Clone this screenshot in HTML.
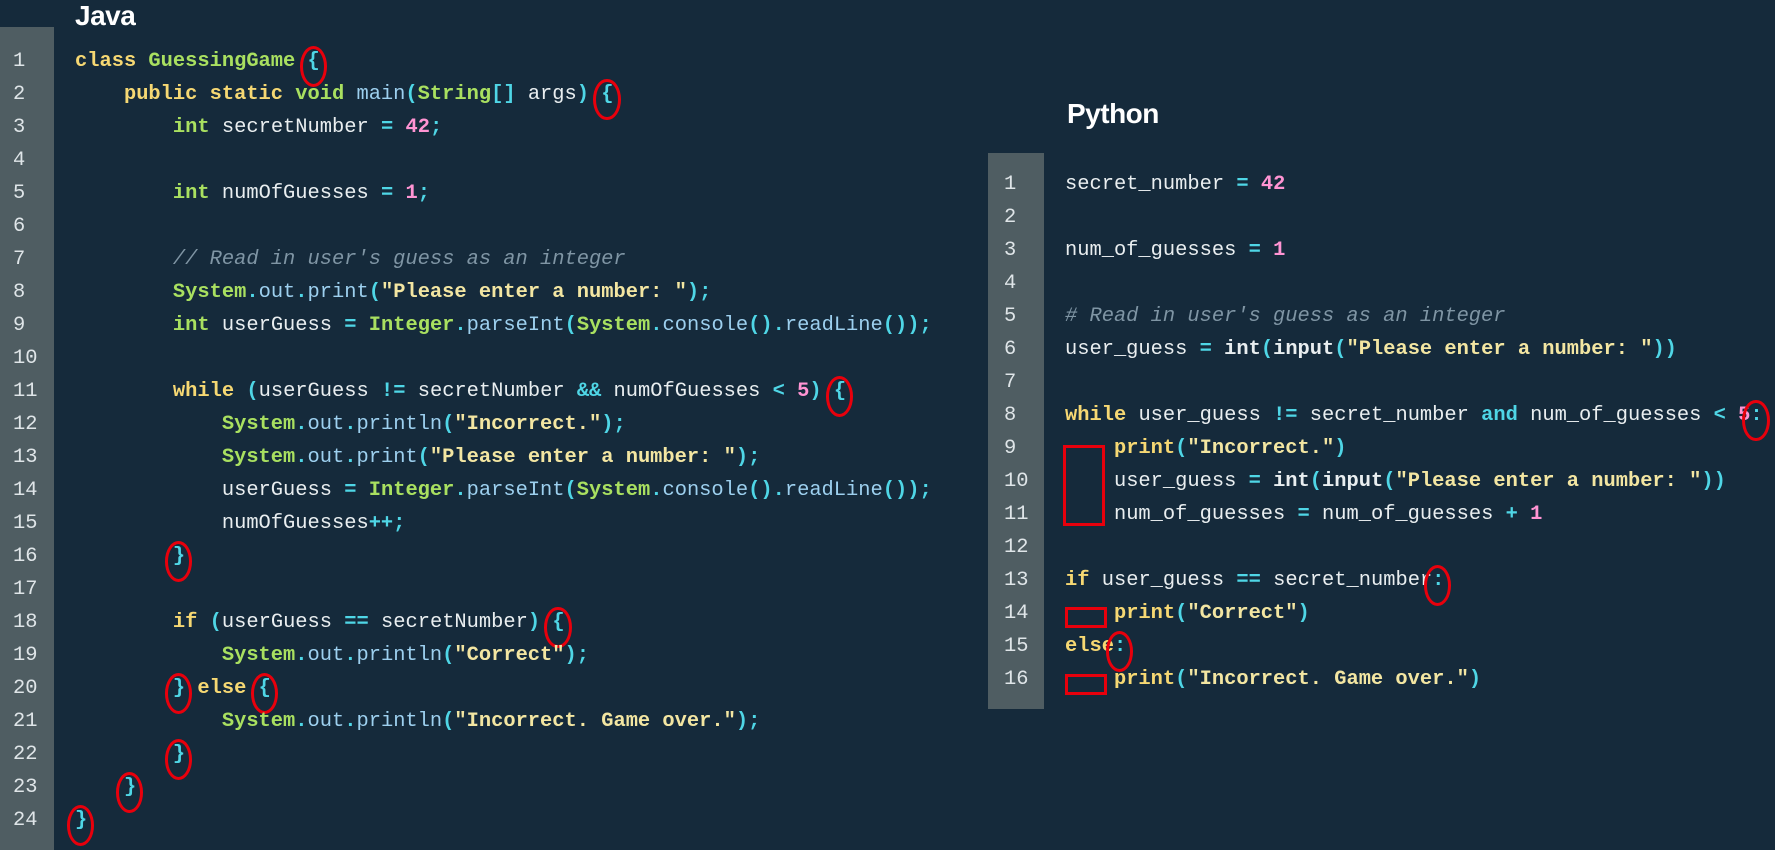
<!DOCTYPE html>
<html><head><meta charset="utf-8"><style>
html,body{margin:0;padding:0}
body{width:1775px;height:850px;background:#152a3b;position:relative;overflow:hidden;font-family:"Liberation Mono",monospace;font-size:20.4px;font-weight:bold;color:#e9eef0}
.t{position:absolute;font-family:"Liberation Sans",sans-serif;font-weight:bold;color:#fff;font-size:28px;letter-spacing:-0.5px}
.g{position:absolute;background:#4f5d62}
.l{position:absolute;white-space:pre;line-height:33px;height:33px}
.n{position:absolute;white-space:pre;line-height:33px;color:#dfe5e8;font-weight:normal}
.k{color:#f6d873}.ty{color:#a9e060}.m{color:#9dd0ef;font-weight:normal}.p{color:#4fd6e6}.s{color:#f3e6a2}.nu{color:#ff94d3}.c{color:#7f95a4;font-style:italic;font-weight:normal}.w{color:#e9eef0;font-weight:normal}
.o{position:relative}
.o::after{content:"";position:absolute;left:-8px;top:-4px;width:calc(100% + 9px);height:35px;border:3.5px solid #e8000c;border-radius:50%}
.r{position:absolute;border:3.5px solid #e8000c;box-sizing:border-box}
</style></head><body>
<div class="t" style="left:75px;top:0px">Java</div>
<div class="g" style="left:0;top:27px;width:54px;height:823px"></div>
<div class="l" style="left:75px;top:45px"><span class="k">class </span><span class="ty">GuessingGame</span> <span class="o p">{</span></div>
<div class="l" style="left:75px;top:78px">    <span class="k">public static </span><span class="ty">void </span><span class="m">main</span><span class="p">(</span><span class="ty">String</span><span class="p">[]</span> <span class="w">args</span><span class="p">)</span> <span class="o p">{</span></div>
<div class="l" style="left:75px;top:111px">        <span class="ty">int</span> <span class="w">secretNumber</span> <span class="p">=</span> <span class="nu">42</span><span class="p">;</span></div>
<div class="l" style="left:75px;top:177px">        <span class="ty">int</span> <span class="w">numOfGuesses</span> <span class="p">=</span> <span class="nu">1</span><span class="p">;</span></div>
<div class="l" style="left:75px;top:243px">        <span class="c">// Read in user's guess as an integer</span></div>
<div class="l" style="left:75px;top:276px">        <span class="ty">System</span><span class="p">.</span><span class="m">out</span><span class="p">.</span><span class="m">print</span><span class="p">(</span><span class="s">"Please enter a number: "</span><span class="p">);</span></div>
<div class="l" style="left:75px;top:309px">        <span class="ty">int</span> <span class="w">userGuess</span> <span class="p">=</span> <span class="ty">Integer</span><span class="p">.</span><span class="m">parseInt</span><span class="p">(</span><span class="ty">System</span><span class="p">.</span><span class="m">console</span><span class="p">().</span><span class="m">readLine</span><span class="p">());</span></div>
<div class="l" style="left:75px;top:375px">        <span class="k">while</span> <span class="p">(</span><span class="w">userGuess</span> <span class="p">!=</span> <span class="w">secretNumber</span> <span class="p">&amp;&amp;</span> <span class="w">numOfGuesses</span> <span class="p">&lt;</span> <span class="nu">5</span><span class="p">)</span> <span class="o p">{</span></div>
<div class="l" style="left:75px;top:408px">            <span class="ty">System</span><span class="p">.</span><span class="m">out</span><span class="p">.</span><span class="m">println</span><span class="p">(</span><span class="s">"Incorrect."</span><span class="p">);</span></div>
<div class="l" style="left:75px;top:441px">            <span class="ty">System</span><span class="p">.</span><span class="m">out</span><span class="p">.</span><span class="m">print</span><span class="p">(</span><span class="s">"Please enter a number: "</span><span class="p">);</span></div>
<div class="l" style="left:75px;top:474px">            <span class="w">userGuess</span> <span class="p">=</span> <span class="ty">Integer</span><span class="p">.</span><span class="m">parseInt</span><span class="p">(</span><span class="ty">System</span><span class="p">.</span><span class="m">console</span><span class="p">().</span><span class="m">readLine</span><span class="p">());</span></div>
<div class="l" style="left:75px;top:507px">            <span class="w">numOfGuesses</span><span class="p">++;</span></div>
<div class="l" style="left:75px;top:540px">        <span class="o p">}</span></div>
<div class="l" style="left:75px;top:606px">        <span class="k">if</span> <span class="p">(</span><span class="w">userGuess</span> <span class="p">==</span> <span class="w">secretNumber</span><span class="p">)</span> <span class="o p">{</span></div>
<div class="l" style="left:75px;top:639px">            <span class="ty">System</span><span class="p">.</span><span class="m">out</span><span class="p">.</span><span class="m">println</span><span class="p">(</span><span class="s">"Correct"</span><span class="p">);</span></div>
<div class="l" style="left:75px;top:672px">        <span class="o p">}</span> <span class="k">else</span> <span class="o p">{</span></div>
<div class="l" style="left:75px;top:705px">            <span class="ty">System</span><span class="p">.</span><span class="m">out</span><span class="p">.</span><span class="m">println</span><span class="p">(</span><span class="s">"Incorrect. Game over."</span><span class="p">);</span></div>
<div class="l" style="left:75px;top:738px">        <span class="o p">}</span></div>
<div class="l" style="left:75px;top:771px">    <span class="o p">}</span></div>
<div class="l" style="left:75px;top:804px"><span class="o p">}</span></div>
<div class="n" style="left:13px;top:45px">1
2
3
4
5
6
7
8
9
10
11
12
13
14
15
16
17
18
19
20
21
22
23
24</div>

<div class="t" style="left:1067px;top:98px">Python</div>
<div class="g" style="left:988px;top:153px;width:56px;height:556px"></div>
<div class="n" style="left:1004px;top:168px">1
2
3
4
5
6
7
8
9
10
11
12
13
14
15
16</div>
<div class="l" style="left:1065px;top:168px"><span class="w">secret_number</span> <span class="p">=</span> <span class="nu">42</span></div>
<div class="l" style="left:1065px;top:234px"><span class="w">num_of_guesses</span> <span class="p">=</span> <span class="nu">1</span></div>
<div class="l" style="left:1065px;top:300px"><span class="c"># Read in user's guess as an integer</span></div>
<div class="l" style="left:1065px;top:333px"><span class="w">user_guess</span> <span class="p">=</span> int<span class="p">(</span>input<span class="p">(</span><span class="s">"Please enter a number: "</span><span class="p">))</span></div>
<div class="l" style="left:1065px;top:399px"><span class="k">while</span> <span class="w">user_guess</span> <span class="p">!=</span> <span class="w">secret_number</span> <span class="p">and</span> <span class="w">num_of_guesses</span> <span class="p">&lt;</span> <span class="nu">5</span><span class="o p">:</span></div>
<div class="l" style="left:1065px;top:432px">    <span class="k">print</span><span class="p">(</span><span class="s">"Incorrect."</span><span class="p">)</span></div>
<div class="l" style="left:1065px;top:465px">    <span class="w">user_guess</span> <span class="p">=</span> int<span class="p">(</span>input<span class="p">(</span><span class="s">"Please enter a number: "</span><span class="p">))</span></div>
<div class="l" style="left:1065px;top:498px">    <span class="w">num_of_guesses</span> <span class="p">=</span> <span class="w">num_of_guesses</span> <span class="p">+</span> <span class="nu">1</span></div>
<div class="l" style="left:1065px;top:564px"><span class="k">if</span> <span class="w">user_guess</span> <span class="p">==</span> <span class="w">secret_number</span><span class="o p">:</span></div>
<div class="l" style="left:1065px;top:597px">    <span class="k">print</span><span class="p">(</span><span class="s">"Correct"</span><span class="p">)</span></div>
<div class="l" style="left:1065px;top:630px"><span class="k">else</span><span class="o p">:</span></div>
<div class="l" style="left:1065px;top:663px">    <span class="k">print</span><span class="p">(</span><span class="s">"Incorrect. Game over."</span><span class="p">)</span></div>
<div class="r" style="left:1063px;top:445px;width:42px;height:81px"></div>
<div class="r" style="left:1065px;top:607px;width:42px;height:21px"></div>
<div class="r" style="left:1065px;top:674px;width:42px;height:21px"></div>
</body></html>
